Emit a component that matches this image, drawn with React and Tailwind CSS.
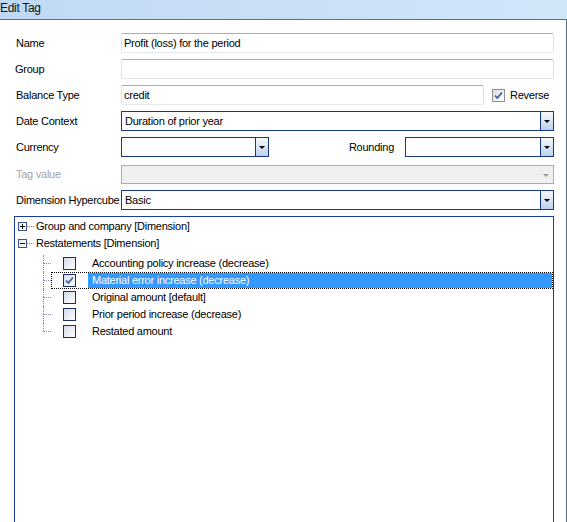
import React from "react";

const FONT = "font-['Liberation_Sans',Arial,sans-serif] text-[11px] tracking-[-0.25px]";

function Label({ children, dim }) {
  return (
    <div className={`w-[107px] shrink-0 pl-[2px] whitespace-nowrap ${dim ? "text-[#a3a3a3]" : "text-black"}`}>
      {children}
    </div>
  );
}

function TextBox({ value, className = "flex-1" }) {
  return (
    <div className={`${className} h-[20px] rounded-[2px] border border-[#abadb3] border-l-[#e2e3ea] border-r-[#dbdfe6] border-b-[#e3e9ef] flex items-center pl-[2px] bg-white`}>
      {value}
    </div>
  );
}

function Arrow({ color = "border-t-black" }) {
  return <span className={`w-0 h-0 border-l-[3px] border-r-[3px] border-t-[3px] border-l-transparent border-r-transparent ${color} mt-[1px]`} />;
}

function Combo({ value, className = "flex-1" }) {
  return (
    <div className={`${className} h-[20px] border border-[#17368f] flex bg-white`}>
      <div className="flex-1 flex items-center pl-[3px] whitespace-nowrap">{value}</div>
      <div className="w-[13px] border-l border-[#17368f] bg-gradient-to-b from-[#f6f9fd] to-[#bcd1ee] flex items-center justify-center">
        <Arrow />
      </div>
    </div>
  );
}

function Check({ checked, tree }) {
  return (
    <div
      className={`w-[13px] h-[13px] shrink-0 border flex items-center justify-center bg-gradient-to-br ${
        tree ? "border-[#1c2c66] from-[#d3dbe8] to-[#ffffff]" : "border-[#8f8f8f] from-[#dcdcdc] to-[#ffffff]"
      }`}
    >
      {checked && (
        <svg width="11" height="11" viewBox="0 0 11 11">
          <path d="M2 5.5 L4.3 8 L9 2.5" fill="none" stroke="#3b5aa6" strokeWidth="1.8" />
        </svg>
      )}
    </div>
  );
}

function ExpandBox({ open }) {
  return (
    <div className="w-[9px] h-[9px] shrink-0 border border-[#3d5390] bg-gradient-to-br from-[#e6ebf3] to-[#ffffff] relative flex items-center justify-center">
      <span className="w-[5px] h-[1px] bg-[#111]" />
      {!open && <span className="absolute w-[1px] h-[5px] bg-[#111]" />}
    </div>
  );
}

const children = [
  "Accounting policy increase (decrease)",
  "Material error increase (decrease)",
  "Original amount [default]",
  "Prior period increase (decrease)",
  "Restated amount",
];

export default function App() {
  return (
    <div className={`w-[567px] h-[522px] overflow-hidden bg-white ${FONT}`}>
      {/* title bar */}
      <div className="h-[19px] bg-gradient-to-r from-[#c1d9f3] to-[#d1e6f9] leading-[16px] text-[12px] tracking-[-0.3px] text-[#111] border-b border-[#5e6e83] box-content">
        Edit Tag
      </div>

      <div className="h-[502px] border-r border-[#5e6e83] pt-[13px] pl-[14px] pr-[12px] flex flex-col">
        <div className="flex items-center h-[20px]">
          <Label>Name</Label>
          <TextBox value="Profit (loss) for the period" />
        </div>
        <div className="flex items-center h-[20px] mt-[6px]">
          <Label>
            <span className="-ml-[1px]">Group</span>
          </Label>
          <TextBox value="" />
        </div>
        <div className="flex items-center h-[20px] mt-[6px]">
          <Label>Balance Type</Label>
          <TextBox value="credit" />
          <div className="w-[70px] shrink-0 flex items-center pl-[8px]">
            <Check checked />
            <span className="ml-[5px]">Reverse</span>
          </div>
        </div>
        <div className="flex items-center h-[20px] mt-[6px]">
          <Label>Date Context</Label>
          <Combo value="Duration of prior year" />
        </div>
        <div className="flex items-center h-[20px] mt-[6px]">
          <Label>Currency</Label>
          <Combo value="" className="w-[148px] shrink-0" />
          <div className="flex-1 flex justify-end pr-[11px]">Rounding</div>
          <Combo value="" className="w-[149px] shrink-0" />
        </div>
        <div className="flex items-center h-[20px] mt-[8px]">
          <Label dim>Tag value</Label>
          <div className="flex-1 h-[19px] border border-[#adadad] bg-[#f0f0f0] flex items-center justify-end pr-[4px]">
            <Arrow color="border-t-[#9a9a9a]" />
          </div>
        </div>
        <div className="flex items-center h-[20px] mt-[6px]">
          <Label>Dimension Hypercube</Label>
          <Combo value="Basic" />
        </div>

        {/* tree view */}
        <div className="mt-[6px] h-[320px] shrink-0 border border-[#1a3c9c] pt-[1px]">
          <div className="flex items-center h-[17px] pl-[3px]">
            <ExpandBox />
            <span className="w-[7px] border-t border-dotted border-[#7d8bb0]" />
            <span className="pl-[2px]">Group and company [Dimension]</span>
          </div>
          <div className="flex items-center h-[17px] pl-[3px]">
            <ExpandBox open />
            <span className="w-[7px] border-t border-dotted border-[#7d8bb0]" />
            <span className="pl-[2px]">Restatements [Dimension]</span>
          </div>
          <div className="mt-[3px]">
            {children.map((c, i) => {
              const sel = i === 1;
              const last = i === children.length - 1;
              return (
                <div key={c} className="flex h-[17px]">
                  <div className="w-[28px] shrink-0" />
                  <div className="w-[8px] shrink-0 flex flex-col">
                    <div className="h-[8px] border-l border-dotted border-[#7d8bb0]" />
                    <div className="h-[9px] border-l border-t border-dotted border-[#7d8bb0]" style={last ? { borderLeftColor: "transparent" } : undefined} />
                  </div>
                  <div className={`flex-1 flex items-stretch border border-dotted ${sel ? "border-black" : "border-transparent"}`}>
                    <div className="w-[11px] shrink-0" />
                    <div className="flex items-center">
                      <Check tree checked={sel} />
                    </div>
                    <div className="w-[12px] shrink-0" />
                    <div className={`flex-1 flex items-center pl-[4px] whitespace-nowrap ${sel ? "bg-[#3399ff] text-white" : ""}`}>{c}</div>
                  </div>
                </div>
              );
            })}
          </div>
        </div>
      </div>
    </div>
  );
}
